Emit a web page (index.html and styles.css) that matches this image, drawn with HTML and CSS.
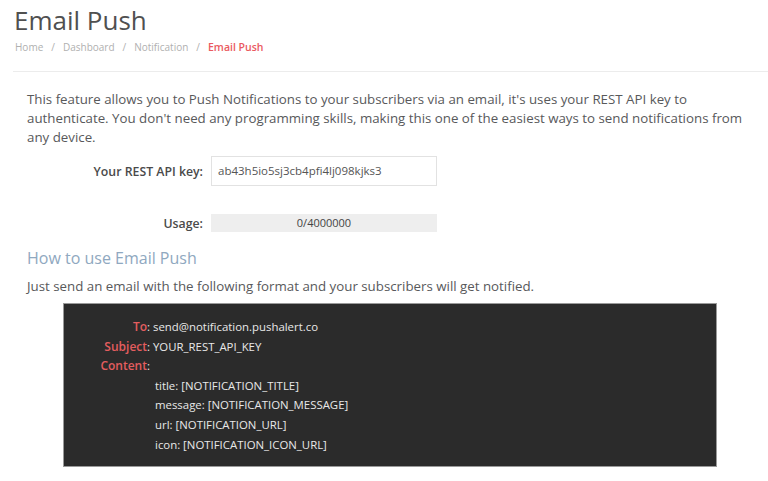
FILE: index.html
```html
<!DOCTYPE html>
<html>
<head>
<meta charset="utf-8">
<link rel="stylesheet" href="styles.css">
</head>
<body>
<div class="page">
  <header class="page-header">
    <h1 class="title">Email Push</h1>
    <nav class="crumbs">
      <span class="crumb">Home</span><span class="sep">/</span>
      <span class="crumb">Dashboard</span><span class="sep">/</span>
      <span class="crumb">Notification</span><span class="sep">/</span>
      <span class="crumb active">Email Push</span>
    </nav>
  </header>
  <div class="rule"></div>
  <main class="content">
    <p class="intro">This feature allows you to Push Notifications to your subscribers via an email, it's uses your REST API key to authenticate. You don't need any programming skills, making this one of the easiest ways to send notifications from any device.</p>
    <div class="form-row key-row">
      <label class="lbl">Your REST API key:</label>
      <div class="input">ab43h5io5sj3cb4pfi4lj098kjks3</div>
    </div>
    <div class="form-row usage-row">
      <label class="lbl">Usage:</label>
      <div class="bar">0/4000000</div>
    </div>
    <h2 class="how">How to use Email Push</h2>
    <p class="just">Just send an email with the following format and your subscribers will get notified.</p>
    <div class="code">
      <div class="crow"><span class="k">To</span><span class="c">:</span><span class="v">send@notification.pushalert.co</span></div>
      <div class="crow"><span class="k">Subject</span><span class="c">:</span><span class="v">YOUR_REST_API_KEY</span></div>
      <div class="crow"><span class="k">Content</span><span class="c">:</span></div>
      <div class="item">title: [NOTIFICATION_TITLE]</div>
      <div class="item">message: [NOTIFICATION_MESSAGE]</div>
      <div class="item">url: [NOTIFICATION_URL]</div>
      <div class="item">icon: [NOTIFICATION_ICON_URL]</div>
    </div>
  </main>
</div>
</body>
</html>
```
FILE: styles.css
```css
* { box-sizing: border-box; }
html, body { margin: 0; padding: 0; background: #fff; }
body { font-family: "Open Sans", "Noto Sans", sans-serif; color: #58595b; }
.page { padding: 0 0 0 13px; }
.page-header { padding-left: 1px; }
.title { margin: 0; padding-top: 3px; font-size: 26px; font-weight: 400; line-height: 34px; color: #505050; }
.crumbs { margin-top: 0; padding-left: 1px; font-size: 10px; line-height: 20px; color: #b0b0b0; display: flex; gap: 8px; }
.crumb.active { color: #ea5a5f; font-weight: 600; font-size: 10.5px; }
.rule { margin-top: 14px; height: 1px; background: #ececec; }
.content { padding: 18px 20px 0 14px; }
.intro { margin: 0; font-size: 13.3px; line-height: 19px; color: #58595b; }
.form-row { display: flex; align-items: center; gap: 8px; }
.lbl { width: 176px; text-align: right; font-size: 12.3px; font-weight: 600; color: #4a4a4a; }
.key-row { margin-top: 9px; }
.input { width: 226px; height: 30px; border: 1px solid #e2e2e2; padding: 0 6px; font-size: 11.5px; line-height: 28px; color: #555; }
.usage-row { margin-top: 28px; }
.bar { width: 226px; height: 18px; background: #eeeeee; text-align: center; font-size: 11px; line-height: 18px; color: #444; }
.how { margin: 15px 0 0; font-size: 16px; font-weight: 400; line-height: 22px; color: #8fa8c0; }
.just { margin: 8px 0 0; font-size: 13.3px; line-height: 19px; color: #58595b; }
.code { margin: 7px 0 0 36px; width: 654px; height: 164px; background: #2b2b2b; border: 1px solid #9a9a9a; padding: 13px 0 0; font-size: 11.4px; line-height: 19.6px; color: #e8e8e8; }
.crow { display: flex; }
.k { width: 83px; text-align: right; color: #e35d5f; font-weight: 600; font-size: 12px; }
.c { margin-right: 3px; }
.item { padding-left: 91px; }
```
